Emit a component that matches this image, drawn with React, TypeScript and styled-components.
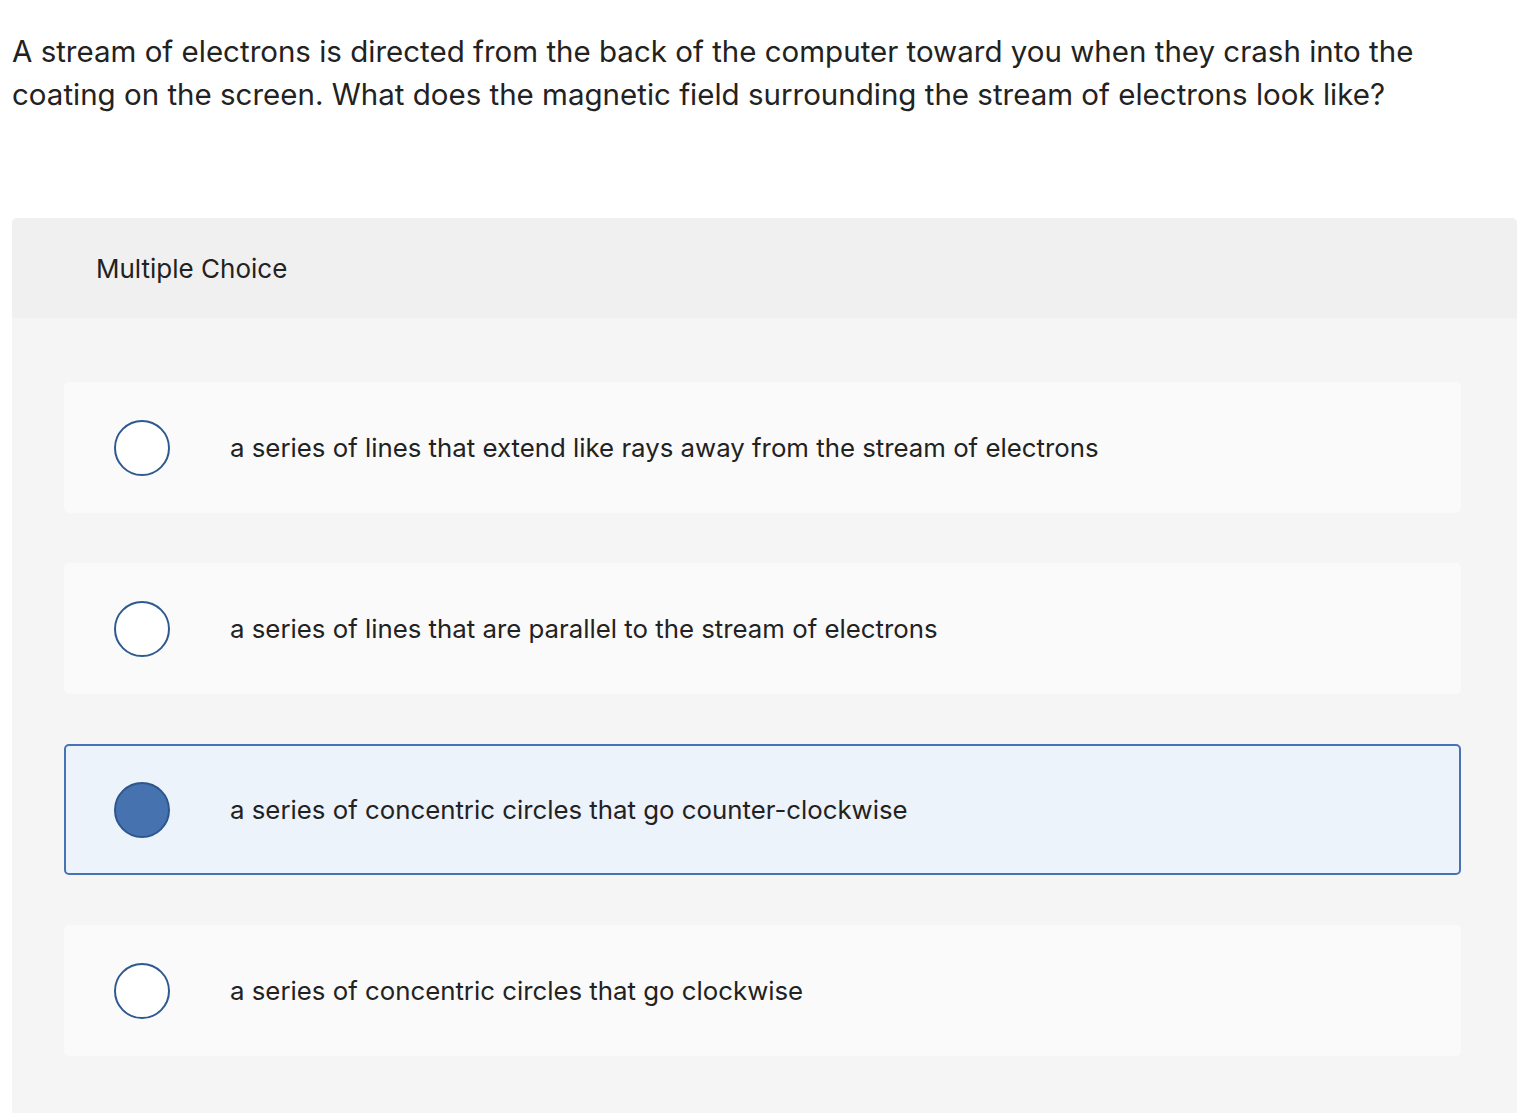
import React, { useState } from "react";
import styled, { createGlobalStyle } from "styled-components";

const GlobalStyle = createGlobalStyle`
  html, body {
    margin: 0;
    padding: 0;
    background: #ffffff;
  }
  body {
    font-family: Inter, Lato, Arial, sans-serif;
    color: #222222;
  }
`;

const Page = styled.div`
  padding: 30px 12px 0 12px;
`;

const Question = styled.p`
  margin: 0;
  font-size: 29.5px;
  line-height: 43px;
  color: #222222;
  white-space: nowrap;
`;

const Panel = styled.section`
  margin-top: 102px;
  margin-right: 1px;
  border-radius: 5px 5px 0 0;
  overflow: hidden;
  background: #f5f5f5;
`;

const PanelHeader = styled.div`
  height: 100px;
  display: flex;
  align-items: center;
  padding-left: 84px;
  background: #f0f0f0;
  font-size: 26px;
  color: #222222;
`;

const ChoiceList = styled.div`
  display: flex;
  flex-direction: column;
  gap: 50px;
  padding: 64px 56px 57px 52px;
`;

const Choice = styled.label<{ $selected: boolean }>`
  box-sizing: border-box;
  height: 131px;
  display: flex;
  align-items: center;
  padding-left: ${({ $selected }) => ($selected ? "48px" : "50px")};
  border-radius: 5px;
  background: ${({ $selected }) => ($selected ? "#edf3fb" : "#fafafa")};
  border: ${({ $selected }) => ($selected ? "2px solid #4673b4" : "none")};
  cursor: pointer;
`;

const Radio = styled.span<{ $selected: boolean }>`
  box-sizing: border-box;
  flex: none;
  width: 56px;
  height: 56px;
  border-radius: 50%;
  border: 2px solid ${({ $selected }) => ($selected ? "#2f568c" : "#2f5a90")};
  background: ${({ $selected }) => ($selected ? "#4672b0" : "#ffffff")};
`;

const ChoiceText = styled.span`
  margin-left: 60px;
  font-size: 25.8px;
  color: #222222;
`;

const choices = [
  "a series of lines that extend like rays away from the stream of electrons",
  "a series of lines that are parallel to the stream of electrons",
  "a series of concentric circles that go counter-clockwise",
  "a series of concentric circles that go clockwise",
];

export default function App() {
  const [selected, setSelected] = useState(2);

  return (
    <>
      <GlobalStyle />
      <Page>
        <Question>
          A stream of electrons is directed from the back of the computer toward you when they crash into the
          <br />
          coating on the screen. What does the magnetic field surrounding the stream of electrons look like?
        </Question>
        <Panel>
          <PanelHeader>Multiple Choice</PanelHeader>
          <ChoiceList>
            {choices.map((text, i) => (
              <Choice key={i} $selected={selected === i} onClick={() => setSelected(i)}>
                <Radio $selected={selected === i} />
                <ChoiceText>{text}</ChoiceText>
              </Choice>
            ))}
          </ChoiceList>
        </Panel>
      </Page>
    </>
  );
}
